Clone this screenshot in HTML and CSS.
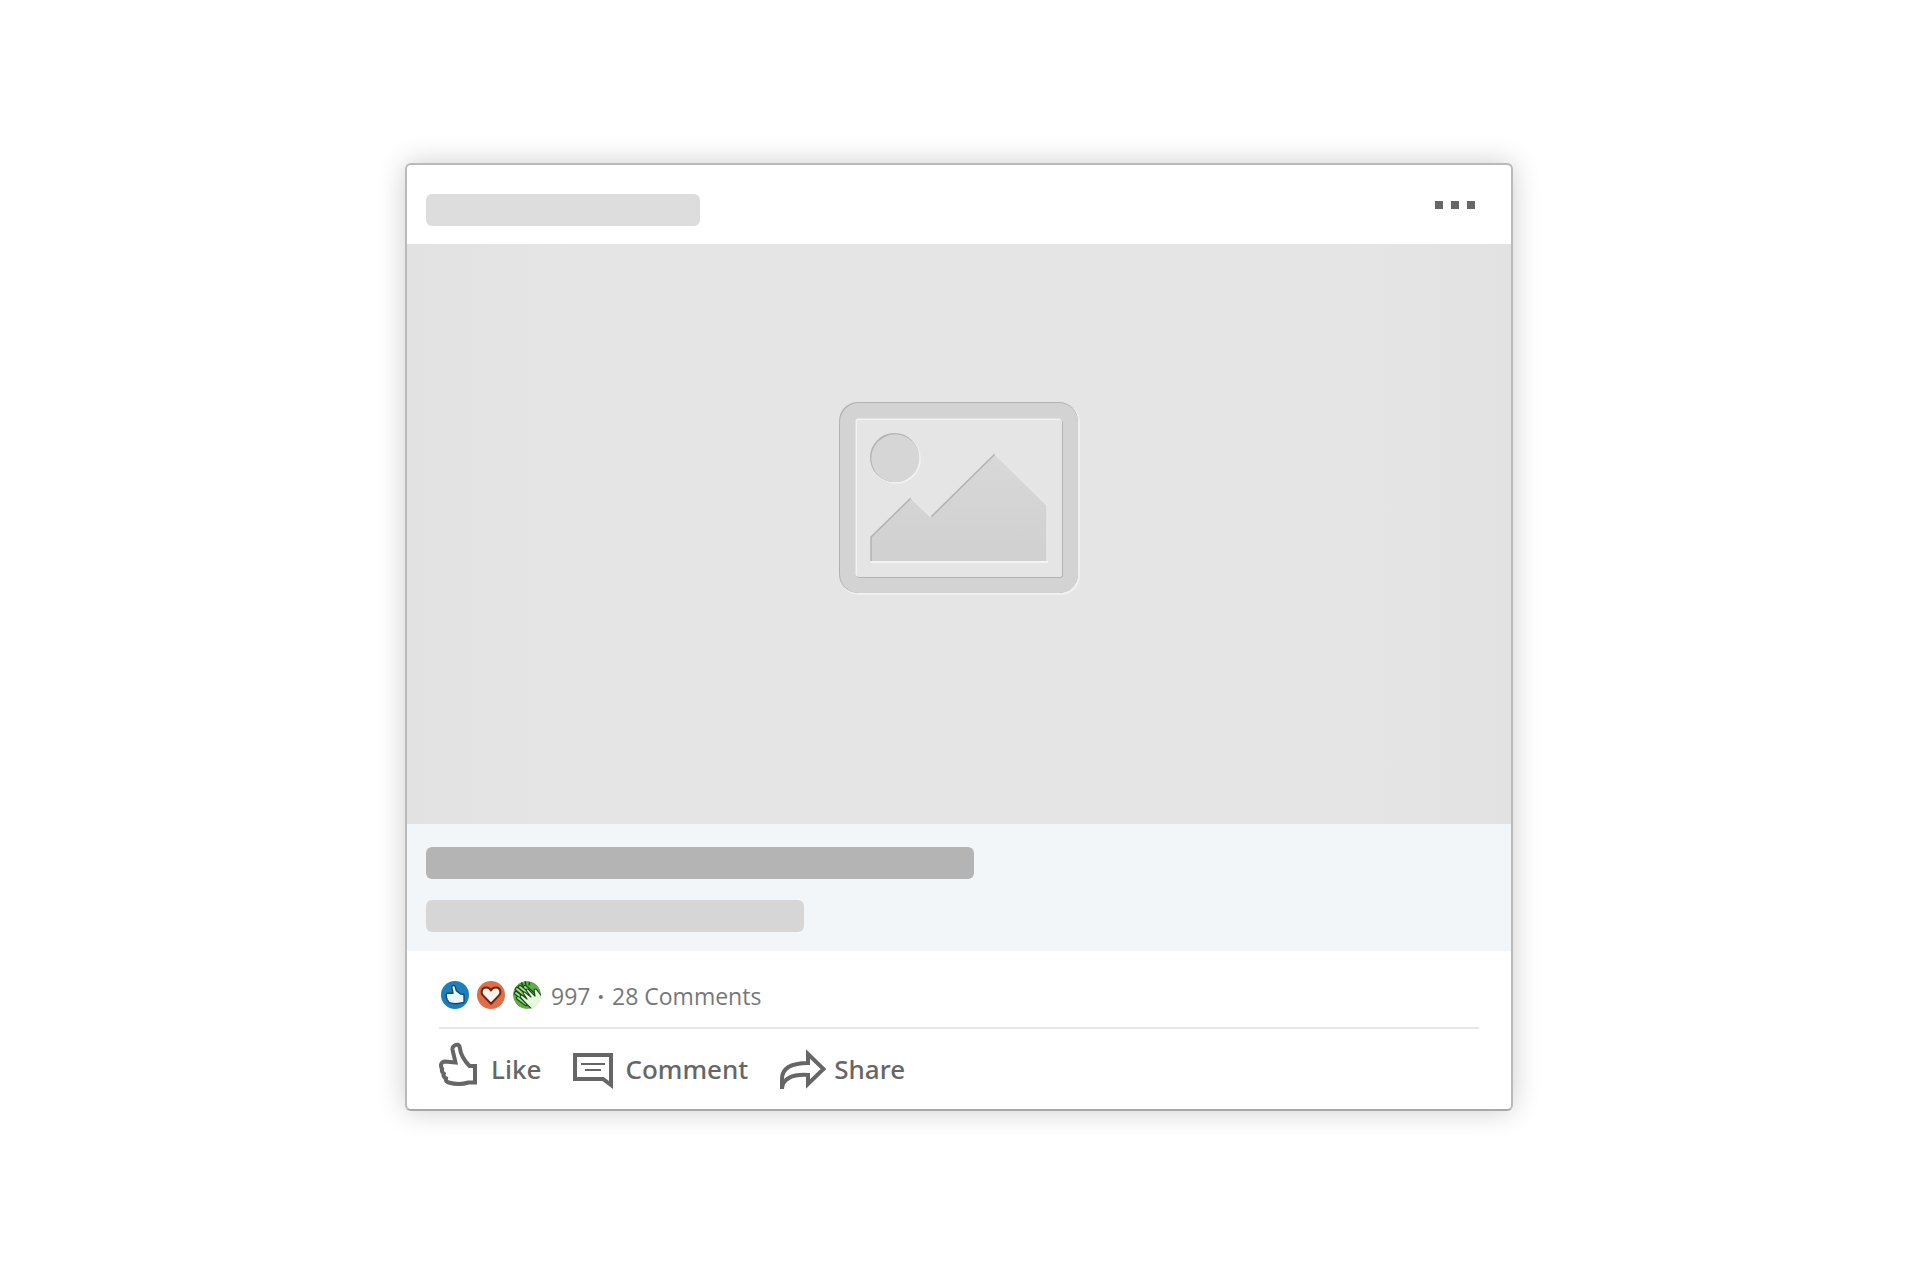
FILE: index.html
```html
<!DOCTYPE html>
<html lang="en">
<head>
<meta charset="utf-8">
<meta name="viewport" content="width=device-width, initial-scale=1">
<title>Post</title>
<link rel="stylesheet" href="styles.css">
</head>
<body>
<main class="page">
  <article class="card">
    <header class="card-header">
      <div class="bar bar-author"></div>
      <button class="menu" type="button" aria-label="More options">
        <span class="dot"></span><span class="dot"></span><span class="dot"></span>
      </button>
    </header>
    <div class="media">
      <svg class="placeholder" viewBox="-2 0 246 196" aria-hidden="true">
        <defs>
          <linearGradient id="fade" x1="0" y1="0" x2="0" y2="1">
            <stop offset="0" stop-color="#d8d8d8"/>
            <stop offset="1" stop-color="#d0d0d0"/>
          </linearGradient>
        </defs>
        <rect x="2" y="2" width="240" height="192" rx="19" fill="#f0f0f0"/>
        <rect x="1" y="1" width="239" height="191" rx="19" fill="#b2b2b2"/>
        <rect x="2" y="2" width="238" height="190" rx="19" fill="#d3d3d3"/>
        <rect x="18.500" y="19" width="206.500" height="158" rx="3" fill="#b2b2b2"/>
        <rect x="17.500" y="17.500" width="206" height="158" rx="3" fill="#f2f2f2"/>
        <rect x="19" y="19" width="205" height="157" rx="2" fill="#e5e5e5"/>
        <circle cx="58" cy="58" r="24.800" fill="#f2f2f2"/>
        <circle cx="56.500" cy="56.500" r="24.500" fill="#b2b2b2"/>
        <circle cx="57.300" cy="57.300" r="24" fill="#d6d6d6"/>
        <path d="M33 136L73 97L93 116L157 53L209 104V160H33Z" fill="url(#fade)"/>
        <path d="M33 160V136L73 97M93 116L157 53" fill="none" stroke="#b0b0b0" stroke-width="1.400"/>
        <path d="M73 97L93 116M157 53L209 104V160.500" fill="none" stroke="#e8e8e8" stroke-width="1.500"/>
        <path d="M33 161H210" fill="none" stroke="#f4f4f4" stroke-width="2"/>
      </svg>
    </div>
    <div class="caption">
      <div class="bar bar-title"></div>
      <div class="bar bar-subtitle"></div>
    </div>
    <footer class="card-footer">
      <div class="reactions">
        <svg class="reaction" viewBox="0 0 28 28" aria-hidden="true">
          <circle cx="14" cy="14" r="14" fill="#1c7fbc"/>
          <path d="M11.500 4.700C12.800 4 14.200 4.800 14.500 6.500L15.300 9.600L19.500 13L23 13.300V21.500L20 21.900C15.500 23.300 12 22.900 8.500 21.700C7.300 21.300 6.800 20.500 7 19.600C6 19 5.600 18.200 6 17.400C5.100 16.800 4.900 16 5.400 15.100C4.700 13.700 5.400 12.200 6.900 12.100L12 12.300L11 7.500C10.600 6.400 10.800 5.200 11.500 4.700Z" fill="#eaf7fc" stroke="#104b77" stroke-width="1.400" stroke-linejoin="round"/>
        </svg>
        <svg class="reaction" viewBox="0 0 28 28" aria-hidden="true">
          <circle cx="14" cy="14" r="14" fill="#e06c48"/>
          <path d="M14 22.800L6 14.400C3.300 11.500 4.700 6.800 8.900 6.600C11.200 6.500 12.800 7.600 14 9.400C15.200 7.600 16.900 6.500 19.100 6.600C23.300 6.800 24.700 11.500 22 14.400Z" fill="#fff1ec" stroke="#6b2512" stroke-width="2" stroke-linejoin="round"/>
        </svg>
        <svg class="reaction" viewBox="0 0 28 28" aria-hidden="true">
          <defs><clipPath id="disc"><circle cx="14" cy="14" r="14"/></clipPath></defs>
          <g clip-path="url(#disc)">
            <circle cx="14" cy="14" r="14" fill="#61ab4b"/>
            <path d="M8 1.500L10 4.500M12 0L13 4M16.500 1L16 4.500" stroke="#174d15" stroke-width="1.400"/>
            <path d="M4 8L15 17M3 12L13 20M5 17L13 23M7 6L18 15M12 6L20 13" stroke="#174d15" stroke-width="4.400" stroke-linecap="round"/>
            <path d="M4 8L15 17M3 12L13 20M5 17L13 23M7 6L18 15M12 6L20 13" stroke="#a7d891" stroke-width="2" stroke-linecap="round"/>
            <path d="M9 14L14 18L10 12Q11 10 13 12L18 16L13 9Q14 7 16 9L22 15L21 9Q22 7 24 9L30 17L27 29H20Q15 25 8 17Q6 14 9 14Z" fill="#e7f9dc" stroke="#174d15" stroke-width="1.200" stroke-linejoin="round"/>
          </g>
        </svg>
        <span class="counts">997<span class="separator">·</span>28 Comments</span>
      </div>
      <div class="actions">
        <button class="action" type="button">
          <svg class="icon" viewBox="0 0 40 48" aria-hidden="true">
            <path d="M15 3.900C17.500 1.900 20.200 2.500 20.700 5.300C21.500 12 23.500 17 30.500 24H36V40.500H29.500C22.500 42.800 14.500 42 9.500 40.500C7.300 39.800 6.600 38 7 36.300C4.800 35.200 4.200 33.500 4.800 31.700C2.900 30.300 2.500 28.600 3.100 26.900C1 23.500 2 19.800 6 19.500L16.500 20.500C15.500 15.500 14 10.500 13.500 7.500C13.300 5.700 13.700 4.700 15 3.900Z" fill="none" stroke="#666" stroke-width="4"/>
          </svg>
          <span class="label">Like</span>
        </button>
        <button class="action" type="button">
          <svg class="icon" viewBox="0 0 40 48" aria-hidden="true">
            <path d="M2 13H38V43L30 37H2Z" fill="none" stroke="#666" stroke-width="4"/>
            <path d="M8 22H32M12 28H28" stroke="#666" stroke-width="2"/>
          </svg>
          <span class="label">Comment</span>
        </button>
        <button class="action action-share" type="button">
          <svg class="icon icon-wide" viewBox="0 0 46 48" aria-hidden="true">
            <path d="M2 47V37C2 26 11 21 28 21V12L43.500 27L28 42V33C12 32 2 37 2 47Z" fill="none" stroke="#666" stroke-width="4"/>
          </svg>
          <span class="label">Share</span>
        </button>
      </div>
    </footer>
  </article>
</main>
</body>
</html>
```
FILE: styles.css
```css
* {
  box-sizing: border-box;
}

body {
  margin: 0;
  background: #fff;
  color: #666;
  font-family: "Open Sans", "Noto Sans", sans-serif;
}

.page {
  padding: 163px 42px 40px 40px;
}

.card {
  max-width: 1108px;
  margin: 0 auto;
  border: 2px solid #bababa;
  border-bottom-color: #a8a8a8;
  border-radius: 6px;
  background: #fff;
  box-shadow: 0 0 28px rgba(0, 0, 0, 0.2);
  overflow: hidden;
}

.bar {
  height: 32px;
  border-radius: 6px;
  max-width: 100%;
}

.card-header {
  display: flex;
  align-items: flex-start;
  justify-content: space-between;
  padding: 29px 36px 18px 19px;
}

.bar-author {
  width: 274px;
  background: #ddd;
}

.menu {
  display: flex;
  gap: 8px;
  margin: 7px 0 0;
  padding: 0;
  border: 0;
  background: none;
  cursor: pointer;
}

.dot {
  width: 8px;
  height: 8px;
  background: #666;
}

.media {
  display: flex;
  justify-content: center;
  aspect-ratio: 276 / 145;
  padding-top: 157px;
  background: linear-gradient(90deg, #e2e2e2, #e5e5e5 15%, #e5e5e5 85%, #e2e2e2);
}

.placeholder {
  width: 246px;
  height: 196px;
}

.caption {
  display: flex;
  flex-direction: column;
  gap: 21px;
  padding: 23px 19px 19px;
  background: #f2f6f9;
}

.bar-title {
  width: 548px;
  background: #b4b4b4;
}

.bar-subtitle {
  width: 378px;
  background: #d6d6d6;
}

.card-footer {
  padding: 30px 32px 0;
}

.reactions {
  display: flex;
  align-items: center;
  gap: 8px;
  height: 48px;
  padding: 0 0 18px 2px;
  border-bottom: 2px solid #e4e7e8;
}

.reaction {
  width: 28px;
  height: 28px;
}

.counts {
  margin-left: 2px;
  padding-top: 2px;
  color: #777;
  font-size: 23px;
  line-height: 28px;
}

.separator {
  padding: 0 8px 0 7px;
  font-weight: 700;
}

.actions {
  display: flex;
  gap: 32px;
  padding: 13px 0 19px;
}

.action {
  display: flex;
  align-items: center;
  gap: 12px;
  padding: 0;
  border: 0;
  background: none;
  color: #666;
  font-family: "Noto Sans", "Open Sans", sans-serif;
  font-size: 26px;
  font-weight: 500;
  line-height: 42px;
  cursor: pointer;
}

.label {
  padding-top: 6px;
}

.action-share {
  gap: 8px;
}

.icon {
  width: 40px;
  height: 48px;
}

.icon-wide {
  width: 46px;
}
```
